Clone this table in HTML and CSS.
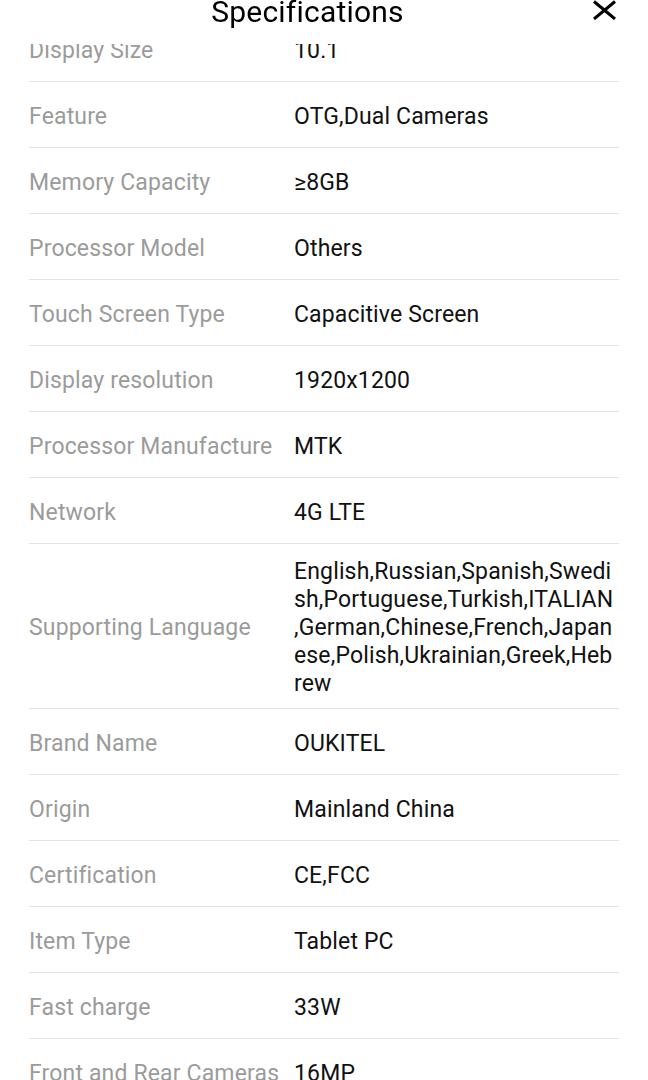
FILE: index.html
```html
<!DOCTYPE html>
<html lang="en">
<head>
<meta charset="utf-8">
<title>Specifications</title>
<link rel="stylesheet" href="styles.css">
</head>
<body>
<div class="sheet">
  <header class="sheet-header">
    <h1 class="sheet-title">Specifications</h1>
    <button class="close-btn" aria-label="Close">
      <svg viewBox="0 0 25 20" width="25" height="20"><path d="M2 1.5 L23 19 M23 1.5 L2 19" stroke="#000" stroke-width="3" fill="none"/></svg>
    </button>
  </header>
  <div class="spec-list">
    <div class="spec-row"><div class="spec-label">Display Size</div><div class="spec-value">10.1</div></div>
    <div class="spec-row"><div class="spec-label">Feature</div><div class="spec-value">OTG,Dual Cameras</div></div>
    <div class="spec-row"><div class="spec-label">Memory Capacity</div><div class="spec-value">≥8GB</div></div>
    <div class="spec-row"><div class="spec-label">Processor Model</div><div class="spec-value">Others</div></div>
    <div class="spec-row"><div class="spec-label">Touch Screen Type</div><div class="spec-value">Capacitive Screen</div></div>
    <div class="spec-row"><div class="spec-label">Display resolution</div><div class="spec-value">1920x1200</div></div>
    <div class="spec-row"><div class="spec-label">Processor Manufacture</div><div class="spec-value">MTK</div></div>
    <div class="spec-row"><div class="spec-label">Network</div><div class="spec-value">4G LTE</div></div>
    <div class="spec-row"><div class="spec-label">Supporting Language</div><div class="spec-value">English,Russian,Spanish,Swedish,Portuguese,Turkish,ITALIAN,German,Chinese,French,Japanese,Polish,Ukrainian,Greek,Hebrew</div></div>
    <div class="spec-row"><div class="spec-label">Brand Name</div><div class="spec-value">OUKITEL</div></div>
    <div class="spec-row"><div class="spec-label">Origin</div><div class="spec-value">Mainland China</div></div>
    <div class="spec-row"><div class="spec-label">Certification</div><div class="spec-value">CE,FCC</div></div>
    <div class="spec-row"><div class="spec-label">Item Type</div><div class="spec-value">Tablet PC</div></div>
    <div class="spec-row"><div class="spec-label">Fast charge</div><div class="spec-value">33W</div></div>
    <div class="spec-row"><div class="spec-label">Front and Rear Cameras</div><div class="spec-value">16MP</div></div>
  </div>
</div>
</body>
</html>
```
FILE: styles.css
```css
html, body {
  margin: 0;
  padding: 0;
  background: #fff;
}
body {
  font-family: Roboto, "Noto Sans", "Liberation Sans", sans-serif;
  overflow: hidden;
  height: 1080px;
}
.sheet {
  width: 648px;
}
.sheet-header {
  position: fixed;
  top: 0;
  left: 0;
  right: 0;
  height: 44px;
  background: #fff;
  z-index: 2;
}
.sheet-title {
  margin: 0;
  position: absolute;
  top: -8.5px;
  left: 0;
  right: 33px;
  text-align: center;
  font-size: 30px;
  font-weight: 400;
  letter-spacing: 0.2px;
  line-height: 40px;
  color: #000;
}
.close-btn {
  position: absolute;
  top: 0;
  left: 592px;
  width: 25px;
  height: 20px;
  padding: 0;
  border: 0;
  background: none;
}
.close-btn svg { display: block; }
.spec-list {
  padding: 16px 29px 0;
}
.spec-row {
  display: grid;
  grid-template-columns: 265px 1fr;
  align-items: center;
  min-height: 66px;
  box-sizing: border-box;
  padding: 14px 0 10px;
  border-bottom: 1px solid #e3e3e3;
}
.spec-label {
  font-size: 23px;
  line-height: 28px;
  letter-spacing: 0.15px;
  color: #9b9b9b;
  white-space: nowrap;
}
.spec-value {
  font-size: 23px;
  line-height: 28px;
  letter-spacing: 0.15px;
  color: #111;
  word-break: break-all;
  line-break: anywhere;
  padding-right: 2px;
}
```
